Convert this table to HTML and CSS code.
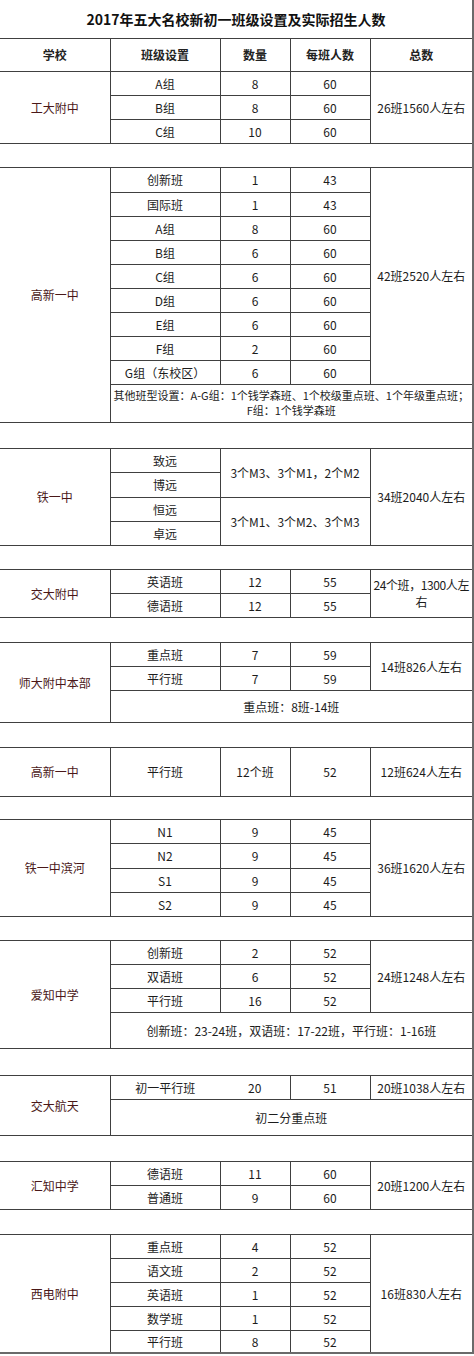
FILE: index.html
```html
<!DOCTYPE html>
<html lang="zh-CN">
<head>
<meta charset="utf-8">
<title>2017年五大名校新初一班级设置及实际招生人数</title>
<link rel="stylesheet" href="styles.css">
</head>
<body>
<table class="t">
<colgroup><col class="c1"><col class="c2"><col class="c3"><col class="c4"><col class="c5"></colgroup>
<tr class="h38"><td colspan="5" class="title">2017年五大名校新初一班级设置及实际招生人数</td></tr>
<tr class="h33 head"><td>学校</td><td>班级设置</td><td>数量</td><td>每班人数</td><td>总数</td></tr>

<tr class="h24"><td rowspan="3" class="sch">工大附中</td><td>A组</td><td>8</td><td>60</td><td rowspan="3">26班1560人左右</td></tr>
<tr class="h24"><td>B组</td><td>8</td><td>60</td></tr>
<tr class="h24"><td>C组</td><td>10</td><td>60</td></tr>
<tr class="h24 gap"><td colspan="5"></td></tr>

<tr class="h25"><td rowspan="10" class="sch">高新一中</td><td>创新班</td><td>1</td><td>43</td><td rowspan="9">42班2520人左右</td></tr>
<tr class="h24"><td>国际班</td><td>1</td><td>43</td></tr>
<tr class="h24"><td>A组</td><td>8</td><td>60</td></tr>
<tr class="h24"><td>B组</td><td>6</td><td>60</td></tr>
<tr class="h24"><td>C组</td><td>6</td><td>60</td></tr>
<tr class="h24"><td>D组</td><td>6</td><td>60</td></tr>
<tr class="h24"><td>E组</td><td>6</td><td>60</td></tr>
<tr class="h24"><td>F组</td><td>2</td><td>60</td></tr>
<tr class="h24"><td>G组（东校区）</td><td>6</td><td>60</td></tr>
<tr class="h38"><td colspan="4" class="note small">其他班型设置：A-G组：1个钱学森班、1个校级重点班、1个年级重点班；<br>F组：1个钱学森班</td></tr>
<tr class="h26 gap"><td colspan="5"></td></tr>

<tr class="h24"><td rowspan="4" class="sch">铁一中</td><td>致远</td><td colspan="2" rowspan="2">3个M3、3个M1，2个M2</td><td rowspan="4">34班2040人左右</td></tr>
<tr class="h25"><td>博远</td></tr>
<tr class="h24"><td>恒远</td><td colspan="2" rowspan="2">3个M1、3个M2、3个M3</td></tr>
<tr class="h24"><td>卓远</td></tr>
<tr class="h24 gap"><td colspan="5"></td></tr>

<tr class="h24"><td rowspan="2" class="sch">交大附中</td><td>英语班</td><td>12</td><td>55</td><td rowspan="2" class="wrap">24个班，1300人左右</td></tr>
<tr class="h24"><td>德语班</td><td>12</td><td>55</td></tr>
<tr class="h25 gap"><td colspan="5"></td></tr>

<tr class="h24"><td rowspan="3" class="sch">师大附中本部</td><td>重点班</td><td>7</td><td>59</td><td rowspan="2">14班826人左右</td></tr>
<tr class="h24"><td>平行班</td><td>7</td><td>59</td></tr>
<tr class="h32"><td colspan="4" class="note">重点班：8班-14班</td></tr>
<tr class="h25 gap"><td colspan="5"></td></tr>

<tr class="h49"><td class="sch">高新一中</td><td>平行班</td><td>12个班</td><td>52</td><td>12班624人左右</td></tr>
<tr class="h23 gap"><td colspan="5"></td></tr>

<tr class="h24"><td rowspan="4" class="sch">铁一中滨河</td><td>N1</td><td>9</td><td>45</td><td rowspan="4">36班1620人左右</td></tr>
<tr class="h25"><td>N2</td><td>9</td><td>45</td></tr>
<tr class="h24"><td>S1</td><td>9</td><td>45</td></tr>
<tr class="h24"><td>S2</td><td>9</td><td>45</td></tr>
<tr class="h24 gap"><td colspan="5"></td></tr>

<tr class="h24"><td rowspan="4" class="sch">爱知中学</td><td>创新班</td><td>2</td><td>52</td><td rowspan="3">24班1248人左右</td></tr>
<tr class="h24"><td>双语班</td><td>6</td><td>52</td></tr>
<tr class="h24"><td>平行班</td><td>16</td><td>52</td></tr>
<tr class="h36"><td colspan="4" class="note">创新班：23-24班，双语班：17-22班，平行班：1-16班</td></tr>
<tr class="h27 gap"><td colspan="5"></td></tr>

<tr class="h24"><td rowspan="2" class="sch">交大航天</td><td class="nor">初一平行班</td><td>20</td><td>51</td><td>20班1038人左右</td></tr>
<tr class="h36"><td colspan="4" class="note">初二分重点班</td></tr>
<tr class="h26 gap"><td colspan="5"></td></tr>

<tr class="h24"><td rowspan="2" class="sch">汇知中学</td><td>德语班</td><td>11</td><td>60</td><td rowspan="2">20班1200人左右</td></tr>
<tr class="h24"><td>普通班</td><td>9</td><td>60</td></tr>
<tr class="h25 gap"><td colspan="5"></td></tr>

<tr class="h24"><td rowspan="5" class="sch">西电附中</td><td>重点班</td><td>4</td><td>52</td><td rowspan="5">16班830人左右</td></tr>
<tr class="h24"><td>语文班</td><td>2</td><td>52</td></tr>
<tr class="h24"><td>英语班</td><td>1</td><td>52</td></tr>
<tr class="h24"><td>数学班</td><td>1</td><td>52</td></tr>
<tr class="h23"><td>平行班</td><td>8</td><td>52</td></tr>
</table>
</body>
</html>
```

FILE: styles.css
```css
html, body {
  margin: 0;
  padding: 0;
  background: #ffffff;
}

.t {
  border-collapse: collapse;
  table-layout: fixed;
  width: 473px;
  font-family: "Noto Sans CJK SC", "Noto Sans", sans-serif;
  font-size: 12px;
  color: #1c1c1c;
  border-top: hidden;
  border-left: hidden;
  border-right: 2px solid #6a6a6a;
  border-bottom: 2px solid #6a6a6a;
}

.c1 { width: 110px; }
.c2 { width: 110px; }
.c3 { width: 70px; }
.c4 { width: 80px; }
.c5 { width: 103px; }

.t td {
  border: 1px solid #404040;
  padding: 0 1px;
  text-align: center;
  vertical-align: middle;
  line-height: 17px;
  white-space: nowrap;
}

.h23 { height: 23px; }
.h24 { height: 24px; }
.h25 { height: 25px; }
.h26 { height: 26px; }
.h27 { height: 27px; }
.h32 { height: 32px; }
.h33 { height: 33px; }
.h36 { height: 36px; }
.h38 { height: 38px; }
.h49 { height: 49px; }

.t td.title {
  font-size: 14px;
  font-weight: bold;
  color: #111111;
  padding-top: 2px;
}

.head td {
  font-weight: bold;
  color: #222222;
}

.t td.sch {
  color: #4a1818;
}

.t td.wrap {
  white-space: normal;
  line-height: 17px;
  letter-spacing: -0.4px;
  padding: 0;
}

.t td.note {
  white-space: normal;
}

.t td.small {
  font-size: 11px;
  line-height: 15px;
  padding: 0;
}

.t td.nor {
  border-right-style: hidden;
}
```
